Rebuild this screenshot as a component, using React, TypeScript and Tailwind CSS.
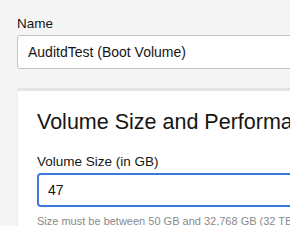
import React from "react";

export default function App() {
  return (
    <div
      className="w-[290px] h-[226px] overflow-hidden bg-[#f5f5f5] text-[#161513]"
      style={{ fontFamily: '"Liberation Sans", Arial, sans-serif' }}
    >
      <div className="pl-[17px] pt-[16px] w-[400px]">
        <div className="text-[13.5px] leading-[16px] text-[#161513]">Name</div>
        <div className="mt-[3px] h-[34px] w-[380px] rounded-[3px] border border-[#c4c4c8] bg-white flex items-center pl-[10px] text-[14px] text-[#161513]">
          AuditdTest (Boot Volume)
        </div>
        <div className="mt-[19px] w-[400px] border-t-[3px] border-t-[#e4e4e8] border-l border-l-[#ececee] bg-white pl-[19px] pt-[17px] pb-[20px]">
          <div className="text-[21.5px] leading-[28px] whitespace-nowrap text-[#161513]">
            Volume Size and Performance
          </div>
          <div className="mt-[18px] text-[13.5px] leading-[16px] text-[#161513]">
            Volume Size (in GB)
          </div>
          <div className="mt-[3px] h-[34px] w-[360px] rounded-[4px] border-2 border-[#3b7ad9] bg-white flex items-center pl-[9px] text-[14px] text-[#161513]">
            47
          </div>
          <div className="mt-[7px] text-[11px] leading-[14px] whitespace-nowrap text-[#8a8a8e]">
            Size must be between 50 GB and 32,768 GB (32 TB). Default value is 50 GB.
          </div>
        </div>
      </div>
    </div>
  );
}
